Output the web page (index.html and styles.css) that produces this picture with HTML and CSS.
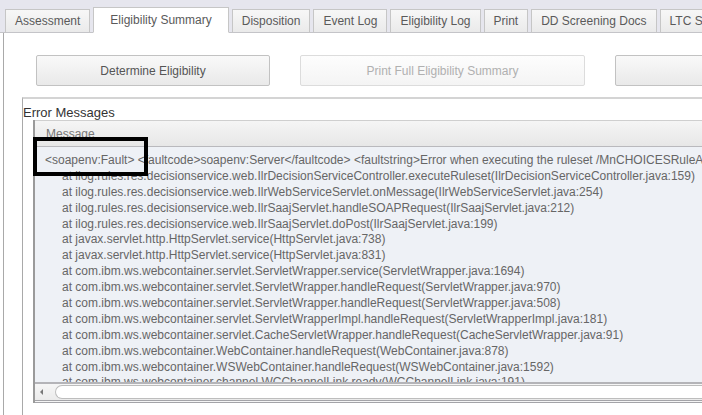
FILE: index.html
```html
<!DOCTYPE html>
<html lang="en">
<head>
  <meta charset="UTF-8">
  <title>Eligibility Summary</title>
  <link rel="stylesheet" href="styles.css">
</head>
<body>
  <div class="tabbar">
    <div class="tab">Assessment</div>
    <div class="tab active">Eligibility Summary</div>
    <div class="tab">Disposition</div>
    <div class="tab">Event Log</div>
    <div class="tab">Eligibility Log</div>
    <div class="tab">Print</div>
    <div class="tab">DD Screening Docs</div>
    <div class="tab">LTC Screening Docs</div>
  </div>
  <div class="panel">
    <div class="actions">
      <button class="btn btn-determine">Determine Eligibility</button>
      <button class="btn btn-print" disabled>Print Full Eligibility Summary</button>
      <button class="btn btn-extra">&nbsp;</button>
    </div>
    <div class="group">
      <div class="group-title">Error Messages</div>
      <div class="grid">
        <div class="grid-head">Message</div>
        <div class="grid-body">
          <div class="row">&lt;soapenv:Fault&gt; &lt;faultcode&gt;soapenv:Server&lt;/faultcode&gt; &lt;faultstring&gt;Error when executing the ruleset /MnCHOICESRuleApp/1.0/MnCHOICESRules/1.0&lt;/faultstring&gt;</div>
          <div class="row trace">at ilog.rules.res.decisionservice.web.IlrDecisionServiceController.executeRuleset(IlrDecisionServiceController.java:159)</div>
          <div class="row trace">at ilog.rules.res.decisionservice.web.IlrWebServiceServlet.onMessage(IlrWebServiceServlet.java:254)</div>
          <div class="row trace">at ilog.rules.res.decisionservice.web.IlrSaajServlet.handleSOAPRequest(IlrSaajServlet.java:212)</div>
          <div class="row trace">at ilog.rules.res.decisionservice.web.IlrSaajServlet.doPost(IlrSaajServlet.java:199)</div>
          <div class="row trace">at javax.servlet.http.HttpServlet.service(HttpServlet.java:738)</div>
          <div class="row trace">at javax.servlet.http.HttpServlet.service(HttpServlet.java:831)</div>
          <div class="row trace">at com.ibm.ws.webcontainer.servlet.ServletWrapper.service(ServletWrapper.java:1694)</div>
          <div class="row trace">at com.ibm.ws.webcontainer.servlet.ServletWrapper.handleRequest(ServletWrapper.java:970)</div>
          <div class="row trace">at com.ibm.ws.webcontainer.servlet.ServletWrapper.handleRequest(ServletWrapper.java:508)</div>
          <div class="row trace">at com.ibm.ws.webcontainer.servlet.ServletWrapperImpl.handleRequest(ServletWrapperImpl.java:181)</div>
          <div class="row trace">at com.ibm.ws.webcontainer.servlet.CacheServletWrapper.handleRequest(CacheServletWrapper.java:91)</div>
          <div class="row trace">at com.ibm.ws.webcontainer.WebContainer.handleRequest(WebContainer.java:878)</div>
          <div class="row trace">at com.ibm.ws.webcontainer.WSWebContainer.handleRequest(WSWebContainer.java:1592)</div>
          <div class="row trace">at com.ibm.ws.webcontainer.channel.WCChannelLink.ready(WCChannelLink.java:191)</div>
        </div>
        <div class="hscroll">
          <span class="arrow"></span>
          <span class="thumb"></span>
        </div>
        <div class="highlight"></div>
      </div>
    </div>
  </div>
</body>
</html>
```

FILE: styles.css
```css
*{margin:0;padding:0;box-sizing:border-box;}
body{width:702px;height:415px;overflow:hidden;background:#fff;font-family:'Liberation Sans',Arial,sans-serif;font-size:12px;color:#444;}

.tabbar{display:flex;align-items:flex-end;gap:3px;height:33px;padding:0 0 0 5px;background:#e6e6ee;border-bottom:1px solid #c4c4c8;white-space:nowrap;}
.tab{flex:none;height:24px;line-height:22px;padding:0 9px;margin-bottom:-1px;background:linear-gradient(#f7f7f7,#eaeaea);border:1px solid #c6c6c6;border-bottom-color:#c4c4c8;color:#5a5a5a;}
.tab.active{height:26px;line-height:24px;padding:0 16px;background:#fff;border-bottom-color:#fff;}

.panel{margin-left:3px;width:900px;height:382px;border-left:1px solid #a9a9a9;}
.actions{display:flex;gap:30px;padding:22px 0 0 32px;}
.btn{height:31px;font-family:inherit;font-size:12px;color:#555;background:linear-gradient(#f9f9f9,#e9e9e9);border:1px solid #c2c2c2;border-radius:2px;}
.btn-determine{width:234px;}
.btn-print{width:285px;color:#b0b0b0;background:linear-gradient(#fdfdfd,#f4f4f4);border-color:#dcdcdc;}
.btn-extra{width:200px;}

.group{margin:11px 0 0 18px;border-top:2px solid #d4d4d4;border-left:1px solid #a9a9a9;height:340px;}
.group-title{font-size:13px;color:#333;padding:5px 0 0 0;height:21px;line-height:17px;}
.grid{position:relative;margin-left:10px;border-left:2px solid #9a9a9a;}
.grid-head{height:27px;line-height:26px;padding-left:11px;background:linear-gradient(#f5f5f5,#e7e7e7);border-top:1px solid #cfcfcf;border-bottom:1px solid #b9b9bd;color:#777;}
.grid-body{height:235px;overflow:hidden;padding-top:5px;background:#eef1f6;color:#666;}
.row{height:15.9px;line-height:16px;padding-left:10px;white-space:nowrap;}
.row.trace{padding-left:27px;}
.hscroll{display:flex;align-items:center;height:21px;padding-left:5px;background:linear-gradient(#f6f6f6,#ebebeb);border-top:2px solid #b4b4b8;border-bottom:3px double #a4a4a8;}
.arrow{width:0;height:0;border-top:3px solid transparent;border-bottom:3px solid transparent;border-right:3px solid #777;}
.thumb{flex:1;height:14px;margin-left:12px;background:#fff;border:1px solid #bdbdbd;border-right:none;border-radius:7px 0 0 7px;}

.highlight{position:absolute;left:-2px;top:17px;width:115px;height:39px;border:4px solid #000;}
```
